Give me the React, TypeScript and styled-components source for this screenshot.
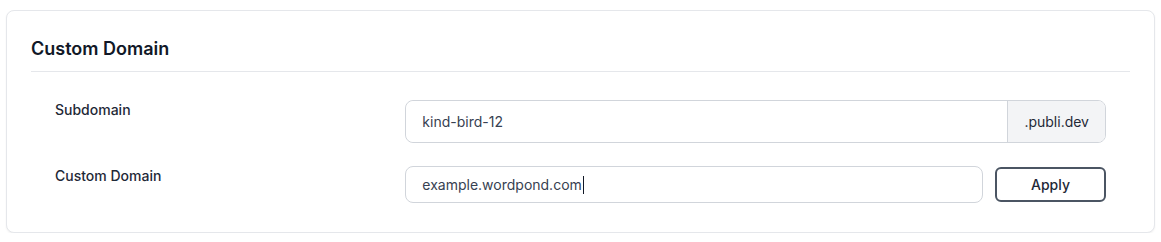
import React from "react";
import styled, { createGlobalStyle } from "styled-components";

const GlobalStyle = createGlobalStyle`
  body {
    margin: 0;
    background: #fff;
    font-family: Inter, "Noto Sans", sans-serif;
    -webkit-font-smoothing: antialiased;
  }
`;

export const Card = styled.section`
  margin: 10px 6px 0;
  padding: 24px 24px 29px;
  border: 1px solid #e5e7eb;
  border-radius: 8px;
  background-color: #fff;
  box-shadow: 0 1px 2px rgba(0, 0, 0, 0.06);
`;

export const Title = styled.h2`
  margin: 0;
  padding-bottom: 8px;
  border-bottom: 1px solid #e5e7eb;
  font-size: 18px;
  line-height: 28px;
  font-weight: 600;
  color: #111827;
`;

export const Form = styled.div`
  display: flex;
  flex-direction: column;
  gap: 23px;
  padding: 28px 24px 0;
`;

export const Row = styled.div`
  display: grid;
  grid-template-columns: 1fr 2fr;
  align-items: start;
`;

export const Label = styled.label`
  font-size: 14px;
  line-height: 20px;
  font-weight: 500;
  color: #1f2937;
`;

export const Controls = styled.div`
  display: flex;
  align-items: center;
  gap: 12px;
`;

export const Group = styled.div`
  flex: 1;
  display: flex;
  height: 41px;
  border: 1px solid #d1d5db;
  border-radius: 8px;
  overflow: hidden;
`;

export const Field = styled.div<{ $bordered?: boolean }>`
  flex: 1;
  display: flex;
  align-items: center;
  box-sizing: border-box;
  height: ${(p) => (p.$bordered ? "37px" : "auto")};
  padding: 0 16px;
  border: ${(p) => (p.$bordered ? "1px solid #d1d5db" : "none")};
  border-radius: 8px;
  font-size: 14px;
  color: #374151;
  background: #fff;
`;

export const Addon = styled.div`
  display: flex;
  align-items: center;
  padding: 0 16px;
  border-left: 1px solid #d1d5db;
  background-color: #f3f4f6;
  font-size: 14px;
  color: #1f2937;
`;

export const Caret = styled.span`
  display: inline-block;
  width: 1px;
  height: 18px;
  margin-left: 1px;
  background-color: #111827;
`;

export const Button = styled.button`
  box-sizing: border-box;
  width: 111px;
  height: 35px;
  border: 2px solid #4b5563;
  border-radius: 6px;
  background-color: #fff;
  font-family: inherit;
  font-size: 14px;
  font-weight: 500;
  color: #1f2937;
  cursor: pointer;
`;

export default function App() {
  return (
    <>
      <GlobalStyle />
      <Card>
        <Title>Custom Domain</Title>
        <Form>
          <Row>
            <Label>Subdomain</Label>
            <Group>
              <Field>kind-bird-12</Field>
              <Addon>.publi.dev</Addon>
            </Group>
          </Row>
          <Row>
            <Label>Custom Domain</Label>
            <Controls>
              <Field $bordered>
                example.wordpond.com
                <Caret />
              </Field>
              <Button>Apply</Button>
            </Controls>
          </Row>
        </Form>
      </Card>
    </>
  );
}
